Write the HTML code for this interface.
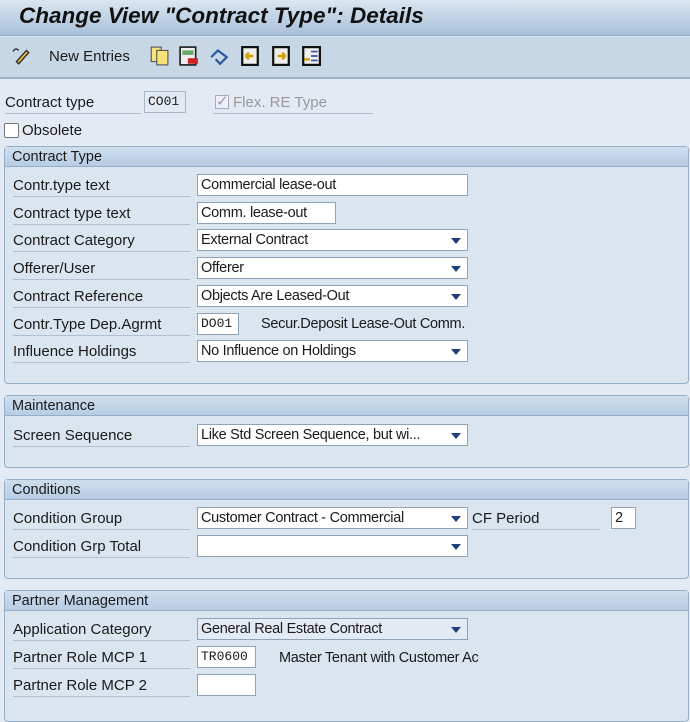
<!DOCTYPE html><html><head><style>
*{margin:0;padding:0;box-sizing:border-box}
body{width:690px;height:719px;overflow:hidden;background:#e3eaf3;font-family:"Liberation Sans","DejaVu Sans",sans-serif;font-size:15px;color:#1a1a1a;position:relative}
.a{position:absolute}
#title{left:0;top:0;width:690px;height:36px;background:linear-gradient(#dbe6f1,#a8c0d9);border-bottom:1px solid #8fa9c4}
#title span{position:absolute;left:19px;top:3px;font-size:22.5px;font-weight:bold;font-style:italic;color:#111}
#tb{left:0;top:37px;width:690px;height:42px;background:#c8d7e6;border-bottom:2px solid #9fb3c8}
.grp{position:absolute;left:4px;width:685px;border:1px solid #94aec8;border-radius:4px;background:#dbe5ef}
.grp .h{height:20px;background:linear-gradient(#cfdeed,#b7cde3);border-bottom:1px solid #94aec8;padding-left:7px;line-height:20px;font-size:14.5px}
.lb{position:absolute;left:13px;width:177px;height:22px;line-height:22px;border-bottom:1px solid #b0c0d0}
.in{position:absolute;height:22px;background:#fff;border:1px solid #8ea2b8;line-height:20px;padding-left:3px;white-space:nowrap;overflow:hidden;font-size:14.5px;letter-spacing:-0.3px}
.dd:after{content:"";position:absolute;right:6px;top:8px;border-left:5px solid transparent;border-right:5px solid transparent;border-top:6px solid #1f3f7a}
.mono{font-family:"Liberation Mono",monospace;font-size:13px;letter-spacing:0}
.tx{position:absolute;height:22px;line-height:22px}
.ic{position:absolute;top:9px;width:20px;height:20px}
</style></head><body>
<div id="title" class="a"><span>Change View "Contract Type": Details</span></div>
<div id="tb" class="a">
<svg class="ic" style="left:12px" viewBox="0 0 18 18"><path d="M4 14 L13 4 L15 6 L6 16 Z" fill="#f0c040" stroke="#333" stroke-width="1.3"/><path d="M1 5 q2-4 5 -1" stroke="#333" fill="none" stroke-width="1.3"/></svg>
<div class="tx" style="left:49px;top:9px;font-size:15px">New Entries</div>
<svg class="ic" style="left:149px" viewBox="0 0 18 18"><rect x="2" y="1" width="9" height="13" fill="#f6e27a" stroke="#555"/><rect x="7" y="4" width="10" height="13" fill="#f6e27a" stroke="#555"/></svg>
<svg class="ic" style="left:179px" viewBox="0 0 18 18"><rect x="1" y="1" width="14" height="16" fill="#eee" stroke="#222" stroke-width="1.5"/><rect x="3" y="4" width="10" height="4" fill="#6a6"/><rect x="8" y="11" width="9" height="5" fill="#c22"/></svg>
<svg class="ic" style="left:209px" viewBox="0 0 18 18"><path d="M2 10 L8 4 L16 10 L10 16 L6 12" fill="none" stroke="#2a5aa0" stroke-width="2"/></svg>
<svg class="ic" style="left:240px" viewBox="0 0 18 18"><rect x="2" y="1" width="14" height="16" fill="#eee" stroke="#111" stroke-width="2"/><path d="M5 9 L12 9 M5 9 L8 6 M5 9 L8 12" stroke="#d8a000" stroke-width="2.2"/></svg>
<svg class="ic" style="left:271px" viewBox="0 0 18 18"><rect x="2" y="1" width="14" height="16" fill="#eee" stroke="#111" stroke-width="2"/><path d="M6 9 L13 9 M13 9 L10 6 M13 9 L10 12" stroke="#d8a000" stroke-width="2.2"/></svg>
<svg class="ic" style="left:301px" viewBox="0 0 18 18"><rect x="2" y="1" width="15" height="16" fill="#eee" stroke="#111" stroke-width="2"/><path d="M9 5h6M9 9h6M9 13h6" stroke="#35a" stroke-width="1.5"/><path d="M3 12h5" stroke="#d8a000" stroke-width="2.2"/></svg>
</div>
<div class="tx" style="left:5px;top:92px;border-bottom:1px solid #b0c0d0;width:136px">Contract type</div>
<div class="in mono" style="left:144px;top:91px;width:42px;background:#e3eaf3;border-color:#a8b8c8">CO01</div>
<div class="a" style="left:215px;top:95px;width:14px;height:14px;border:1px solid #aab;background:#eef"></div>
<div class="tx" style="left:216px;top:91px;color:#999">✓</div>
<div class="tx" style="top:92px;color:#999;border-bottom:1px solid #b0c0d0;width:160px;left:213px;padding-left:20px">Flex. RE Type</div>
<div class="a" style="left:4px;top:123px;width:15px;height:15px;border:1px solid #777;background:#fff;border-radius:2px"></div>
<div class="tx" style="left:22px;top:120px">Obsolete</div>

<div class="grp" style="top:146px;height:238px"><div class="h">Contract Type</div></div>
<div class="lb" style="top:175px">Contr.type text</div><div class="in" style="left:197px;top:174px;width:271px">Commercial lease-out</div>
<div class="lb" style="top:203px">Contract type text</div><div class="in" style="left:197px;top:202px;width:139px">Comm. lease-out</div>
<div class="lb" style="top:230px">Contract Category</div><div class="in dd" style="left:197px;top:229px;width:271px">External Contract</div>
<div class="lb" style="top:258px">Offerer/User</div><div class="in dd" style="left:197px;top:257px;width:271px">Offerer</div>
<div class="lb" style="top:286px">Contract Reference</div><div class="in dd" style="left:197px;top:285px;width:271px">Objects Are Leased-Out</div>
<div class="lb" style="top:314px">Contr.Type Dep.Agrmt</div><div class="in mono" style="left:197px;top:313px;width:42px">DO01</div><div class="tx" style="left:261px;top:313px;font-size:14.5px;letter-spacing:-0.3px">Secur.Deposit Lease-Out Comm.</div>
<div class="lb" style="top:341px">Influence Holdings</div><div class="in dd" style="left:197px;top:340px;width:271px">No Influence on Holdings</div>

<div class="grp" style="top:395px;height:73px"><div class="h">Maintenance</div></div>
<div class="lb" style="top:425px">Screen Sequence</div><div class="in dd" style="left:197px;top:424px;width:271px">Like Std Screen Sequence, but wi...</div>

<div class="grp" style="top:479px;height:100px"><div class="h">Conditions</div></div>
<div class="lb" style="top:508px">Condition Group</div><div class="in dd" style="left:197px;top:507px;width:271px">Customer Contract - Commercial</div>
<div class="tx" style="left:472px;top:508px;width:128px;border-bottom:1px solid #b0c0d0">CF Period</div><div class="in" style="left:611px;top:507px;width:25px">2</div>
<div class="lb" style="top:536px">Condition Grp Total</div><div class="in dd" style="left:197px;top:535px;width:271px"></div>

<div class="grp" style="top:590px;height:132px"><div class="h">Partner Management</div></div>
<div class="lb" style="top:619px">Application Category</div><div class="in dd" style="left:197px;top:618px;width:271px;background:#e3eaf3">General Real Estate Contract</div>
<div class="lb" style="top:647px">Partner Role MCP 1</div><div class="in mono" style="left:197px;top:646px;width:59px">TR0600</div><div class="tx" style="left:279px;top:647px;font-size:14.5px;letter-spacing:-0.3px">Master Tenant with Customer Ac</div>
<div class="lb" style="top:675px">Partner Role MCP 2</div><div class="in" style="left:197px;top:674px;width:59px"></div>
</body></html>
